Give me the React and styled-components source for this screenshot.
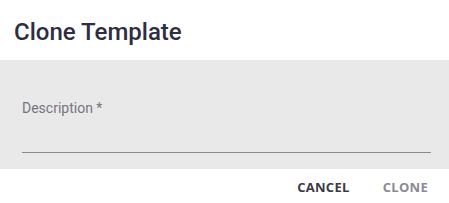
import React from 'react';
import styled, { createGlobalStyle } from 'styled-components';

const GlobalStyle = createGlobalStyle`
  body {
    margin: 0;
    background: #fff;
    font-family: Roboto, "Noto Sans", sans-serif;
  }
`;

const Dialog = styled.div`
  width: 449px;
  height: 203px;
  display: flex;
  flex-direction: column;
  background: #fff;
`;

const Header = styled.div`
  height: 60px;
  display: flex;
  align-items: center;
  padding: 3px 14px 0;
  box-sizing: border-box;
`;

const Title = styled.h2`
  margin: 0;
  font-size: 24px;
  font-weight: 500;
  color: #2f2d3f;
`;

const Body = styled.div`
  height: 109px;
  background: #e9e9e9;
  padding: 40px 18px 0 22px;
  box-sizing: border-box;
`;

const Field = styled.label`
  display: flex;
  flex-direction: column;
`;

const Label = styled.span`
  font-size: 14px;
  color: #76757f;
  line-height: 16px;
`;

const Input = styled.input`
  border: none;
  border-bottom: 1px solid #8a8a92;
  background: transparent;
  height: 36px;
  padding: 0;
  outline: none;
  font-family: inherit;
  font-size: 14px;
`;

const Footer = styled.div`
  flex: 1;
  display: flex;
  justify-content: flex-end;
  align-items: center;
  padding: 2px 13px 0 0;
  gap: 17px;
`;

const Button = styled.button`
  border: none;
  background: none;
  padding: 4px 8px;
  font-family: "Open Sans", Roboto, sans-serif;
  font-size: 13px;
  font-weight: 700;
  letter-spacing: 0.3px;
  color: ${p => (p.disabled ? '#8b8a93' : '#3a3946')};
  cursor: pointer;
`;

export default function App() {
  return (
    <>
      <GlobalStyle />
      <Dialog>
        <Header>
          <Title>Clone Template</Title>
        </Header>
        <Body>
          <Field>
            <Label>Description *</Label>
            <Input />
          </Field>
        </Body>
        <Footer>
          <Button>CANCEL</Button>
          <Button disabled>CLONE</Button>
        </Footer>
      </Dialog>
    </>
  );
}
